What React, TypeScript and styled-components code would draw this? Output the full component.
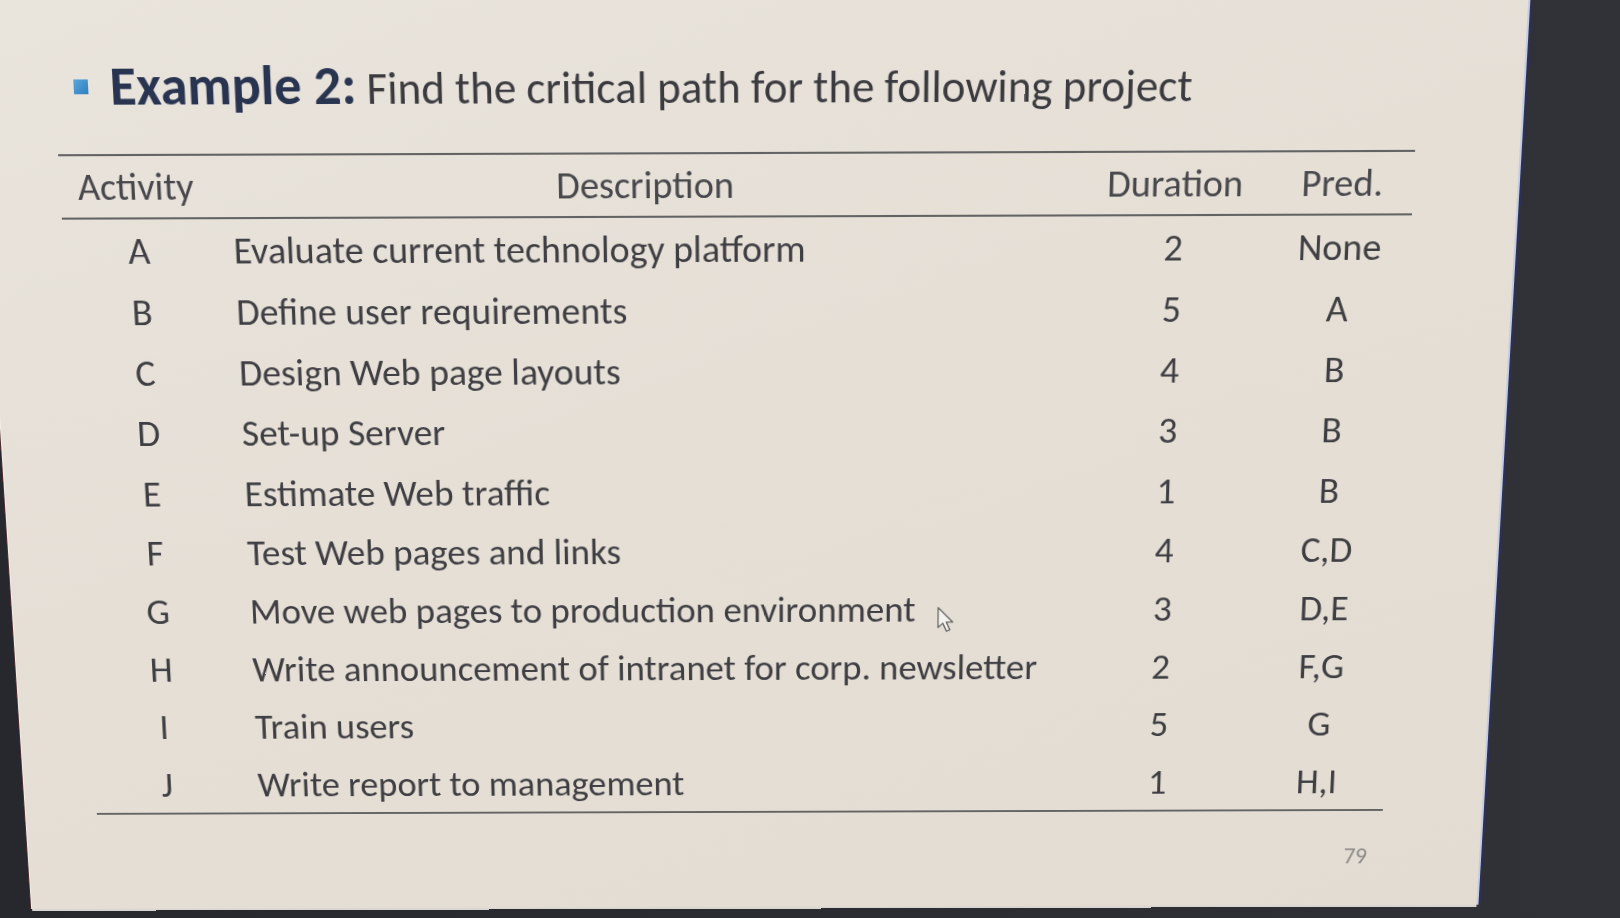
import React from "react";
import styled, { createGlobalStyle } from "styled-components";

const GlobalStyle = createGlobalStyle`
  html, body { margin: 0; padding: 0; background: #24262b; overflow: hidden; }
  #root { width: 1620px; height: 918px; }
`;

const FONT = `"Carlito", "Lato", "Open Sans", sans-serif`;

const Scene = styled.div`
  width: 1620px;
  height: 918px;
  overflow: hidden;
  background: linear-gradient(90deg, #26282d 0%, #2b2d32 60%, #303237 100%);
  display: flex;
  align-items: flex-start;
`;

const Slide = styled.div`
  flex: none;
  margin-left: 3px;
  width: 1499px;
  height: 926px;
  box-sizing: border-box;
  padding: 67px 0 0 0;
  display: flex;
  flex-direction: column;
  background: linear-gradient(160deg, #e9e4dc 0%, #e5dfd6 45%, #e2dcd2 100%);
  box-shadow: 2px 0 0 #c4cde0, 4px 0 0 #2c3058, -1px 0 0 #f4ece6, -2px 0 0 #4a2c30,
    0 2px 0 #d9d6d2;
  transform-origin: 757px 459px;
  transform: perspective(1200px) rotateX(-5.58deg) rotateZ(-0.18deg);
  font-family: ${FONT};
  color: #3d3c40;
`;

const TitleRow = styled.div`
  display: flex;
  align-items: flex-start;
  padding-left: 92px;
  gap: 21px;
`;

const Bullet = styled.span`
  width: 14px;
  height: 14px;
  margin-top: 20px;
  background: linear-gradient(135deg, #5aa6dc, #2f7fbe);
  flex: none;
`;

const Title = styled.h1`
  margin: 0;
  font-size: 43.7px;
  font-weight: 400;
  line-height: 1;
  color: #3b3a3f;
  white-space: nowrap;
`;

const TitleStrong = styled.strong`
  font-size: 52.8px;
  font-weight: 700;
  color: #283450;
`;

const Table = styled.div`
  margin: 38px 0 0 73px;
  width: 1324px;
  border-top: 2px solid #646363;
  border-bottom: 2px solid #646363;
  display: grid;
  grid-template-columns: 148px 849px 188px 139px;
`;

const HeadCell = styled.div`
  height: 59px;
  display: flex;
  align-items: center;
  justify-content: center;
  font-size: 37.5px;
  color: #48474b;
  border-bottom: 2px solid #646363;
  white-space: nowrap;
`;

const Cell = styled.div<{ $left?: boolean }>`
  height: 60.2px;
  display: flex;
  align-items: center;
  justify-content: ${(p) => (p.$left ? "flex-start" : "center")};
  padding-left: ${(p) => (p.$left ? "19px" : "0")};
  font-size: 37.3px;
  color: #3f3e42;
  white-space: nowrap;
`;

const Footer = styled.div`
  display: flex;
  justify-content: flex-end;
  padding: 33px 116px 0 0;
`;

const PageNum = styled.span`
  font-size: 24px;
  color: #8d8a88;
`;

const Cursor = styled.svg`
  margin-left: 21px;
  margin-top: 22px;
  flex: none;
`;

const rows: [string, string, string, string][] = [
  ["A", "Evaluate current technology platform", "2", "None"],
  ["B", "Define user requirements", "5", "A"],
  ["C", "Design Web page layouts", "4", "B"],
  ["D", "Set-up Server", "3", "B"],
  ["E", "Estimate Web traffic", "1", "B"],
  ["F", "Test Web pages and links", "4", "C,D"],
  ["G", "Move web pages to production environment", "3", "D,E"],
  ["H", "Write announcement of intranet for corp. newsletter", "2", "F,G"],
  ["I", "Train users", "5", "G"],
  ["J", "Write report to management", "1", "H,I"],
];

export default function App() {
  return (
    <>
      <GlobalStyle />
      <Scene>
        <Slide>
          <TitleRow>
            <Bullet />
            <Title>
              <TitleStrong>Example 2:</TitleStrong> Find the critical path for the following project
            </Title>
          </TitleRow>
          <Table>
            <HeadCell>Activity</HeadCell>
            <HeadCell>Description</HeadCell>
            <HeadCell>Duration</HeadCell>
            <HeadCell>Pred.</HeadCell>
            {rows.map(([a, d, t, p]) => (
              <React.Fragment key={a}>
                <Cell>{a}</Cell>
                <Cell $left>
                  {d}
                  {a === "G" && (
                    <Cursor width="22" height="29" viewBox="0 0 18 24">
                      <path
                        d="M1.5 1.5 L1.5 18.5 L5.5 14.8 L8.6 21.6 L11.4 20.4 L8.4 13.8 L13.8 13.8 Z"
                        fill="#f4f2ee"
                        stroke="#6a6966"
                        strokeWidth="1.1"
                        strokeLinejoin="round"
                      />
                    </Cursor>
                  )}
                </Cell>
                <Cell>{t}</Cell>
                <Cell>{p}</Cell>
              </React.Fragment>
            ))}
          </Table>
          <Footer>
            <PageNum>79</PageNum>
          </Footer>
        </Slide>
      </Scene>
    </>
  );
}
